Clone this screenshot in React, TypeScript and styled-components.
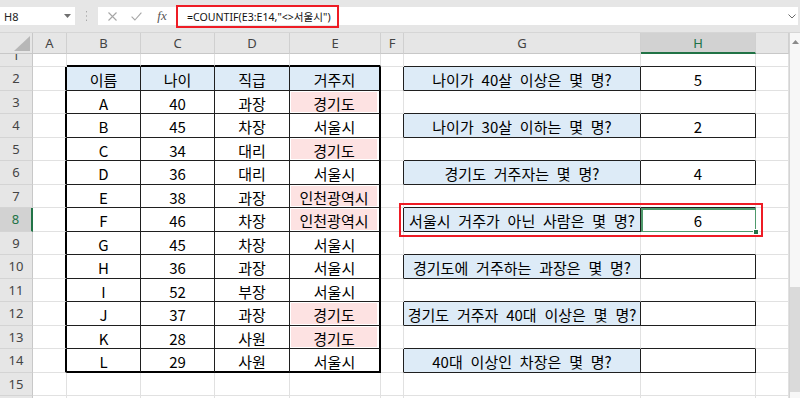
import React from 'react';
import styled, { createGlobalStyle } from 'styled-components';

type CellData = { text?: string | number; fill?: string; pink?: boolean };

const BLUE = '#ddebf7';
const PINK = '#fde2e2';
const GRID = '1px solid #e1e1e1';
const LINE = '1px solid #1f1f1f';
const THICK = '2px solid #000';
const GREEN = '#217346';

const COLS = ['A', 'B', 'C', 'D', 'E', 'F', 'G', 'H', 'I'];
const ROWS = Array.from({ length: 16 }, (_, i) => i + 1);
const BOX_ROWS = [2, 4, 6, 8, 10, 12, 14];

const people: [string, number, string, string][] = [
  ['A', 40, '과장', '경기도'],
  ['B', 45, '차장', '서울시'],
  ['C', 34, '대리', '경기도'],
  ['D', 36, '대리', '서울시'],
  ['E', 38, '과장', '인천광역시'],
  ['F', 46, '차장', '인천광역시'],
  ['G', 45, '차장', '서울시'],
  ['H', 36, '과장', '서울시'],
  ['I', 52, '부장', '서울시'],
  ['J', 37, '과장', '경기도'],
  ['K', 28, '사원', '경기도'],
  ['L', 29, '사원', '서울시'],
];

const questions: [number, string, string][] = [
  [2, '나이가 40살 이상은 몇 명?', '5'],
  [4, '나이가 30살 이하는 몇 명?', '2'],
  [6, '경기도 거주자는 몇 명?', '4'],
  [8, '서울시 거주가 아닌 사람은 몇 명?', '6'],
  [10, '경기도에 거주하는 과장은 몇 명?', ''],
  [12, '경기도 거주자 40대 이상은 몇 명?', ''],
  [14, '40대 이상인 차장은 몇 명?', ''],
];

const cells: Record<string, CellData> = {};
['이름', '나이', '직급', '거주지'].forEach((t, i) => {
  cells[`${'BCDE'[i]}2`] = { text: t, fill: BLUE };
});
people.forEach(([name, age, rank, home], i) => {
  const r = i + 3;
  cells[`B${r}`] = { text: name };
  cells[`C${r}`] = { text: age };
  cells[`D${r}`] = { text: rank };
  cells[`E${r}`] = { text: home, pink: home !== '서울시' };
});
questions.forEach(([r, q, a]) => {
  cells[`G${r}`] = { text: q, fill: BLUE };
  cells[`H${r}`] = { text: a };
});

// each cell owns its right and bottom edge
function rightEdge(r: number, c: number) {
  if (r >= 2 && r <= 14 && (c === 1 || c === 5)) return THICK;
  if (r >= 2 && r <= 14 && c >= 2 && c <= 4) return LINE;
  if (BOX_ROWS.includes(r) && c >= 6 && c <= 8) return LINE;
  return GRID;
}

function bottomEdge(r: number, c: number) {
  if (c >= 2 && c <= 5 && (r === 1 || r === 14)) return THICK;
  if (c >= 2 && c <= 5 && r >= 2 && r <= 13) return LINE;
  if ((c === 7 || c === 8) && (BOX_ROWS.includes(r) || BOX_ROWS.includes(r + 1))) return LINE;
  return GRID;
}

function App() {
  return (
    <Window>
      <GlobalStyle />
      <TopBar>
        <NameBox>
          H8
          <svg width="7" height="4" viewBox="0 0 7 4">
            <path d="M0 0 L7 0 L3.5 4 Z" fill="#707070" />
          </svg>
        </NameBox>
        <Grip>
          <svg width="3" height="10" viewBox="0 0 3 10">
            <rect x="1" y="0" width="1" height="1.4" fill="#a8a8a8" />
            <rect x="1" y="4.3" width="1" height="1.4" fill="#a8a8a8" />
            <rect x="1" y="8.6" width="1" height="1.4" fill="#a8a8a8" />
          </svg>
        </Grip>
        <FormulaBox>
          <IconSlot>
            <svg width="9" height="9" viewBox="0 0 9 9">
              <path d="M0.5 0.5 L8.5 8.5 M8.5 0.5 L0.5 8.5" stroke="#a6a6a6" strokeWidth="1.1" />
            </svg>
          </IconSlot>
          <IconSlot>
            <svg width="11" height="9" viewBox="0 0 11 9">
              <path d="M0.6 4.6 L3.9 8 L10.4 0.6" stroke="#a6a6a6" strokeWidth="1.1" fill="none" />
            </svg>
          </IconSlot>
          <FxSlot>fx</FxSlot>
          <FormulaMark>=COUNTIF(E3:E14,"&lt;&gt;서울시")</FormulaMark>
          <Chevron>
            <svg width="8" height="5" viewBox="0 0 8 5">
              <path d="M0.5 0.5 L4 4 L7.5 0.5" stroke="#6a6a6a" strokeWidth="1" fill="none" />
            </svg>
          </Chevron>
        </FormulaBox>
      </TopBar>

      <Sheet>
        <GridWrap>
          <Grid>
            <Corner>
              <svg width="33" height="21" viewBox="0 0 33 21">
                <path d="M30 3 L30 18 L14 18 Z" fill="#b7b7b7" />
              </svg>
            </Corner>
            {COLS.map((c) => (
              <ColHeader key={c} $selected={c === 'H'}>
                {c === 'I' ? '' : c}
              </ColHeader>
            ))}
            {ROWS.map((r) => (
              <React.Fragment key={r}>
                <RowHeader $selected={r === 8} $clip={r === 1}>
                  {r < 16 && <RowLabel>{r}</RowLabel>}
                </RowHeader>
                {COLS.map((c, i) => {
                  const d = cells[`${c}${r}`];
                  return (
                    <Cell
                      key={c}
                      $right={rightEdge(r, i + 1)}
                      $bottom={bottomEdge(r, i + 1)}
                      $fill={d?.fill}
                      $pink={d?.pink}
                      $selected={c === 'H' && r === 8}
                    >
                      {d?.text !== undefined && d.text !== '' && <CellText>{d.text}</CellText>}
                    </Cell>
                  );
                })}
              </React.Fragment>
            ))}
          </Grid>
          <RedMark />
        </GridWrap>
        <ScrollBar>
          <ScrollArrow>
            <svg width="7" height="4" viewBox="0 0 7 4">
              <path d="M0 4 L7 4 L3.5 0 Z" fill="#8a8a8a" />
            </svg>
          </ScrollArrow>
          <ScrollTrack />
          <ScrollThumb />
          <ScrollArrow>
            <svg width="7" height="4" viewBox="0 0 7 4">
              <path d="M0 0 L7 0 L3.5 4 Z" fill="#8a8a8a" />
            </svg>
          </ScrollArrow>
        </ScrollBar>
      </Sheet>
    </Window>
  );
}

const GlobalStyle = createGlobalStyle`
html, body {
  margin: 0;
  padding: 0;
  background: #fff;
}
body {
  font-family: "Noto Sans", "Noto Sans CJK KR", sans-serif;
}
`;

const Window = styled.div`
width: 800px;
height: 398px;
overflow: hidden;
background: #fff;
`;

const TopBar = styled.div`
box-sizing: border-box;
height: 33px;
display: flex;
align-items: flex-start;
padding-top: 7px;
background: #e6e6e6;
border-bottom: 1px solid #d6d6d6;
`;

const NameBox = styled.div`
box-sizing: border-box;
width: 75px;
height: 18px;
display: flex;
align-items: center;
justify-content: space-between;
padding: 0 4px 0 4px;
background: #fff;
font-size: 11px;
color: #222;
`;

const Grip = styled.div`
width: 23px;
height: 18px;
display: flex;
align-items: center;
justify-content: center;
`;

const FormulaBox = styled.div`
flex: 1;
height: 18px;
margin-right: 2px;
display: flex;
align-items: center;
padding-left: 2px;
background: #fff;
`;

const IconSlot = styled.div`
width: 24px;
height: 18px;
display: flex;
align-items: center;
justify-content: center;
`;

const FxSlot = styled.div`
width: 28px;
text-align: center;
font-family: "Liberation Serif", serif;
font-style: italic;
font-size: 13px;
color: #555;
line-height: 18px;
`;

const FormulaMark = styled.div`
box-sizing: border-box;
width: 163px;
height: 23px;
align-self: flex-start;
margin-top: -2px;
display: flex;
align-items: center;
padding-left: 9px;
border: 2px solid #ee1c25;
font-family: "Noto Sans", "Noto Sans CJK KR", sans-serif;
font-size: 10.6px;
color: #111;
white-space: nowrap;
`;

const Chevron = styled.div`
margin-left: auto;
width: 12px;
display: flex;
align-items: center;
justify-content: center;
`;

const Sheet = styled.div`
display: flex;
height: 365px;
`;

const GridWrap = styled.div`
position: relative;
flex: 1;
overflow: hidden;
`;

const Grid = styled.div`
display: grid;
grid-template-columns: 33px 34px 74px 74px 75px 91px 23px 237px 115px 1fr;
grid-template-rows: 21px 13px repeat(15, 23.5px);
`;

const Corner = styled.div`
background: #e6e6e6;
border-right: 1px solid #c8c8c8;
border-bottom: 1px solid #c8c8c8;
box-sizing: border-box;
overflow: hidden;
`;

const ColHeader = styled.div<{ $selected?: boolean }>`
box-sizing: border-box;
display: flex;
align-items: center;
justify-content: center;
background: ${(p) => (p.$selected ? '#d2d2d2' : '#e6e6e6')};
border-right: 1px solid #d0d0d0;
border-bottom: ${(p) => (p.$selected ? `2px solid ${GREEN}` : '1px solid #c8c8c8')};
font-size: 13px;
color: ${(p) => (p.$selected ? GREEN : '#444')};
`;

const RowHeader = styled.div<{ $selected?: boolean; $clip?: boolean }>`
box-sizing: border-box;
display: flex;
align-items: ${(p) => (p.$clip ? 'flex-end' : 'center')};
justify-content: center;
overflow: hidden;
background: ${(p) => (p.$selected ? '#d2d2d2' : '#e6e6e6')};
border-right: ${(p) => (p.$selected ? `2px solid ${GREEN}` : '1px solid #c8c8c8')};
border-bottom: 1px solid #d4d4d4;
font-size: 13px;
color: ${(p) => (p.$selected ? GREEN : '#444')};
`;

const RowLabel = styled.span`
flex-shrink: 0;
height: 22.5px;
line-height: 22.5px;
`;

const Cell = styled.div<{
  $right: string;
  $bottom: string;
  $fill?: string;
  $pink?: boolean;
  $selected?: boolean;
}>`
box-sizing: border-box;
position: relative;
min-width: 0;
display: flex;
align-items: center;
justify-content: center;
padding: ${(p) => (p.$pink ? '1px 2px 1px 1px' : '0')};
border-right: ${(p) => p.$right};
border-bottom: ${(p) => p.$bottom};
background: ${(p) => (p.$pink ? PINK : p.$fill ?? '#fff')};
background-clip: content-box;
${(p) =>
  p.$selected &&
  `
  &::after {
    content: '';
    position: absolute;
    left: 0;
    top: 0;
    right: -2px;
    bottom: -2px;
    border: 2px solid #4f9a6c;
  }
  &::before {
    content: '';
    position: absolute;
    right: -4px;
    bottom: -4px;
    width: 4px;
    height: 4px;
    background: ${GREEN};
    border: 1px solid #fff;
    z-index: 1;
  }
`}
`;

const CellText = styled.span`
display: block;
padding-top: 3px;
font-family: "Noto Sans CJK KR", sans-serif;
font-size: 15px;
line-height: 15px;
word-spacing: 4.5px;
color: #000;
white-space: nowrap;
`;

const RedMark = styled.div`
position: absolute;
left: 399px;
top: 170px;
width: 364px;
height: 34px;
box-sizing: border-box;
border: 2px solid #ee1c25;
pointer-events: none;
`;

const ScrollBar = styled.div`
width: 11px;
flex-shrink: 0;
display: flex;
flex-direction: column;
overflow: hidden;
background: #f7f7f7;
border-left: 1px solid #d4d4d4;
box-sizing: border-box;
`;

const ScrollArrow = styled.div`
height: 17px;
flex-shrink: 0;
display: flex;
align-items: center;
justify-content: center;
`;

const ScrollTrack = styled.div`
height: 237px;
flex-shrink: 0;
`;

const ScrollThumb = styled.div`
height: 105px;
flex-shrink: 0;
background: #dadada;
`;

export default App;
